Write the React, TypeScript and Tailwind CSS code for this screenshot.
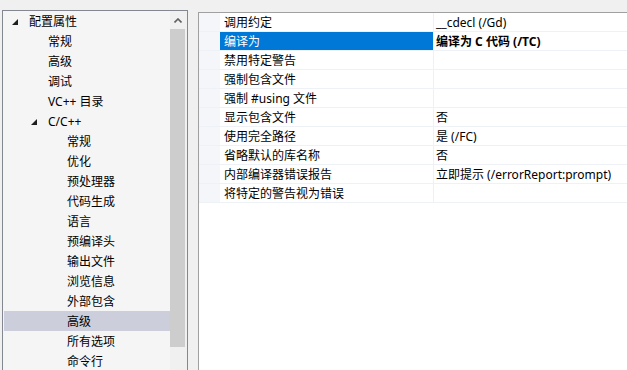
import React from 'react'

type TreeItem = { label: string; level: number; expanded?: boolean; selected?: boolean }

const tree: TreeItem[] = [
  { label: '配置属性', level: 0, expanded: true },
  { label: '常规', level: 1 },
  { label: '高级', level: 1 },
  { label: '调试', level: 1 },
  { label: 'VC++ 目录', level: 1 },
  { label: 'C/C++', level: 1, expanded: true },
  { label: '常规', level: 2 },
  { label: '优化', level: 2 },
  { label: '预处理器', level: 2 },
  { label: '代码生成', level: 2 },
  { label: '语言', level: 2 },
  { label: '预编译头', level: 2 },
  { label: '输出文件', level: 2 },
  { label: '浏览信息', level: 2 },
  { label: '外部包含', level: 2 },
  { label: '高级', level: 2, selected: true },
  { label: '所有选项', level: 2 },
  { label: '命令行', level: 2 },
]

const props: { name: string; value: string; selected?: boolean }[] = [
  { name: '调用约定', value: '__cdecl (/Gd)' },
  { name: '编译为', value: '编译为 C 代码 (/TC)', selected: true },
  { name: '禁用特定警告', value: '' },
  { name: '强制包含文件', value: '' },
  { name: '强制 #using 文件', value: '' },
  { name: '显示包含文件', value: '否' },
  { name: '使用完全路径', value: '是 (/FC)' },
  { name: '省略默认的库名称', value: '否' },
  { name: '内部编译器错误报告', value: '立即提示 (/errorReport:prompt)' },
  { name: '将特定的警告视为错误', value: '' },
]

function Expander() {
  return (
    <svg width="6" height="6" viewBox="0 0 6 6" className="block">
      <polygon points="6,0 6,6 0,6" fill="#1e1e1e" />
    </svg>
  )
}

const indent = ['pl-[8px]', 'pl-[27px]', 'pl-[46px]']

export default function App() {
  return (
    <div
      className="w-[627px] h-[370px] overflow-hidden bg-[#f0f0f0] flex items-stretch text-[12px] text-black"
      style={{ fontFamily: '"Noto Sans", "Noto Sans CJK SC", sans-serif' }}
    >
      {/* Tree panel */}
      <div className="ml-[2px] mt-[10px] w-[186px] h-[380px] shrink-0 border border-[#828790] flex">
        <div className="flex-1 bg-[#f5f5f5] pl-[1px]">
          {tree.map((t, i) => (
            <div
              key={i}
              className={`h-[20px] pt-[2px] flex items-center ${indent[t.level]} ${t.selected ? 'bg-[#cccedb]' : ''}`}
            >
              <div className="w-[17px] flex items-center">{t.expanded && <Expander />}</div>
              <span className="leading-none">{t.label}</span>
            </div>
          ))}
        </div>
        <div className="w-[17px] bg-[#f0f0f0] flex flex-col">
          <div className="h-[18px] flex items-center justify-center pr-[2px]">
            <svg width="8" height="5" viewBox="0 0 8 5">
              <polyline points="0.5,4.5 4,1 7.5,4.5" fill="none" stroke="#606060" strokeWidth="1.6" />
            </svg>
          </div>
          <div className="h-[318px] w-[15px] bg-[#cdcdcd]" />
        </div>
      </div>

      {/* Property grid */}
      <div className="ml-[10px] mt-[12px] flex-1 bg-white border-l border-t border-[#a0a0a0]">
        {props.map((p, i) => (
          <div key={i} className="h-[19px] flex border-b border-[#eef1f6]">
            <div className="w-[21px] bg-[#f4f6fa]" />
            <div
              className={`w-[214px] pl-[4px] pt-[1px] flex items-center border-r border-[#eef1f6] ${p.selected ? 'bg-[#0078d7] text-white' : ''}`}
            >
              {p.name}
            </div>
            <div className={`flex-1 pl-[2px] pt-[1px] flex items-center ${p.selected ? 'font-bold' : ''}`}>{p.value}</div>
          </div>
        ))}
      </div>
    </div>
  )
}
